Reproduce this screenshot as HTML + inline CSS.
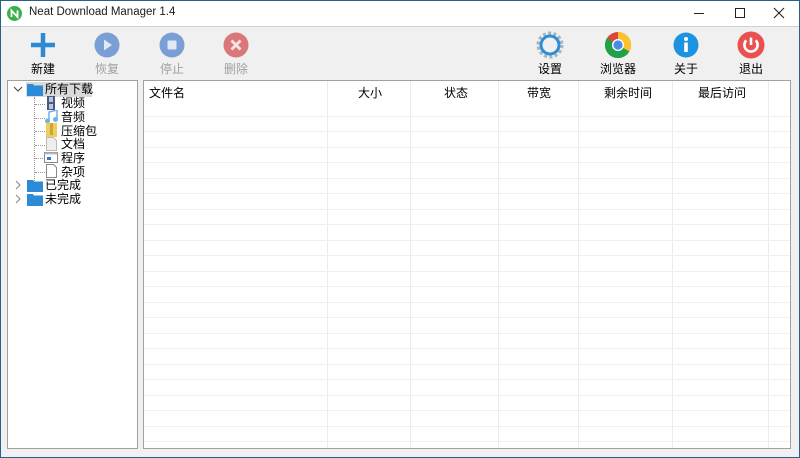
<!DOCTYPE html>
<html><head><meta charset="utf-8"><style>
*{margin:0;padding:0;box-sizing:border-box}
body{width:800px;height:458px;overflow:hidden;background:#f0f0f0;font-family:"Liberation Sans","Noto Sans CJK SC",sans-serif;font-size:12px;color:#000;position:relative}
.win{position:absolute;left:0;top:0;width:800px;height:458px;border:1px solid #2b5f86}
.title{position:absolute;left:0;top:0;width:800px;height:27px;background:#fff;border-bottom:1px solid #d0d0d0}
.title .t{position:absolute;left:29px;top:6px;font-size:11.5px;color:#1a1a1a}
.abs{position:absolute}
.tb{position:absolute;top:60px;font-size:12px;text-align:center;width:60px}
.dis{color:#a0a0a0}
.panel{position:absolute;background:#fff;border:1px solid #a0a0a0}
.tree div{position:absolute;font-size:12px;white-space:nowrap;line-height:14px}
.hdr{position:absolute;top:1px;height:23px;line-height:23px;font-size:12px}
.vl{position:absolute;top:0;width:1px;background:#e5ecf3;height:368px}
.hl{position:absolute;left:0;right:0;height:1px;background:#eef1f4}
</style></head><body>
<div class="title">
<svg class="abs" style="left:7px;top:6px" width="15" height="15"><circle cx="7.5" cy="7.5" r="7.5" fill="#3cb04a"/><path d="M4.5 11V4.5L10.5 11V4.5" stroke="#fff" stroke-width="1.8" fill="none"/></svg>
<div class="t">Neat Download Manager 1.4</div>
<div class="abs" style="left:694px;top:13px;width:10px;height:1px;background:#222"></div>
<div class="abs" style="left:735px;top:8px;width:10px;height:10px;border:1px solid #222"></div>
<svg class="abs" style="left:773px;top:7px" width="12" height="12"><path d="M1 1L11 11M11 1L1 11" stroke="#222" stroke-width="1.1"/></svg>
</div>
<div class="win"></div>

<svg class="abs" style="left:29px;top:31px" width="28" height="28"><path d="M14 2V26M2 14H26" stroke="#2a8ad6" stroke-width="4.5"/></svg>
<div class="tb" style="left:13px">新建</div>
<svg class="abs" style="left:94px;top:32px" width="26" height="26"><circle cx="13" cy="13" r="12.5" fill="#7a9fd4"/><path d="M10 7.5L18 13L10 18.5Z" fill="#dfe8f5"/></svg>
<div class="tb dis" style="left:77px">恢复</div>
<svg class="abs" style="left:159px;top:32px" width="26" height="26"><circle cx="13" cy="13" r="12.5" fill="#7a9fd4"/><rect x="8.5" y="8.5" width="9" height="9" rx="1" fill="#dfe8f5"/></svg>
<div class="tb dis" style="left:142px">停止</div>
<svg class="abs" style="left:223px;top:32px" width="26" height="26"><circle cx="13" cy="13" r="12.5" fill="#d9777b"/><path d="M8.5 8.5L17.5 17.5M17.5 8.5L8.5 17.5" stroke="#f6e3e3" stroke-width="2.8"/></svg>
<div class="tb dis" style="left:206px">删除</div>

<svg class="abs" style="left:536px;top:31px" width="28" height="28"><circle cx="14" cy="14" r="11.5" fill="none" stroke="#a9b4bd" stroke-width="4" stroke-dasharray="3 2.2"/><circle cx="14" cy="14" r="9" fill="none" stroke="#2f8fd6" stroke-width="3"/></svg>
<div class="tb" style="left:520px">设置</div>
<svg class="abs" style="left:604px;top:31px" width="28" height="28"><circle cx="14" cy="14" r="13" fill="#de4437"/><path d="M14 14L14 1A13 13 0 0 1 25.3 20.5Z" fill="#fbc22e"/><path d="M14 14L25.3 20.5A13 13 0 0 1 2.7 20.5Z" fill="#1fa24a"/><path d="M14 14L2.7 20.5A13 13 0 0 1 3 7Z" fill="#1fa24a"/><circle cx="14" cy="14" r="6" fill="#fff"/><circle cx="14" cy="14" r="4.6" fill="#4a8be8"/></svg>
<div class="tb" style="left:588px">浏览器</div>
<svg class="abs" style="left:673px;top:32px" width="26" height="26"><circle cx="13" cy="13" r="12.5" fill="#1c93e0"/><circle cx="13" cy="7" r="2" fill="#fff"/><rect x="11.2" y="10.5" width="3.6" height="9.5" fill="#fff"/></svg>
<div class="tb" style="left:656px">关于</div>
<svg class="abs" style="left:737px;top:31px" width="28" height="28"><circle cx="14" cy="14" r="13.5" fill="#ea5050"/><path d="M9.3 9.3A6.6 6.6 0 1 0 18.7 9.3" stroke="#fff" stroke-width="2.6" fill="none"/><path d="M14 6.5V14" stroke="#fff" stroke-width="2.6"/></svg>
<div class="tb" style="left:721px">退出</div>

<div class="panel tree" style="left:7px;top:80px;width:131px;height:369px">
<svg class="abs" style="left:5px;top:4px" width="10" height="8"><path d="M1 2L5 6L9 2" stroke="#444" fill="none"/></svg>
<div style="left:18px;top:1px;width:66px;height:15px;background:#dadada"></div>
<svg class="abs" style="left:19px;top:2px" width="16" height="13"><path d="M0 1H6L7 2.5H16V13H0Z" fill="#2c8ad8"/></svg>
<div style="left:37px;top:1px">所有下载</div>
<div style="left:26px;top:16px;width:1px;height:84px;border-left:1px dotted #999"></div>
<div style="left:27px;top:23px;width:10px;border-top:1px dotted #999"></div>
<div style="left:27px;top:37px;width:10px;border-top:1px dotted #999"></div>
<div style="left:27px;top:50px;width:10px;border-top:1px dotted #999"></div>
<div style="left:27px;top:64px;width:10px;border-top:1px dotted #999"></div>
<div style="left:27px;top:77px;width:10px;border-top:1px dotted #999"></div>
<div style="left:27px;top:91px;width:10px;border-top:1px dotted #999"></div>
<svg class="abs" style="left:38px;top:15px" width="10" height="14"><rect x="1" y="0" width="8" height="14" fill="#4a5a80"/><rect x="3" y="1" width="4" height="5" fill="#b8c7e0"/><rect x="3" y="8" width="4" height="5" fill="#b8c7e0"/></svg>
<div style="left:53px;top:15px">视频</div>
<svg class="abs" style="left:36px;top:29px" width="14" height="14"><path d="M5 11V2L13 0V9" stroke="#6fb2e8" stroke-width="1.5" fill="none"/><circle cx="3.5" cy="11" r="2.5" fill="#6fb2e8"/><circle cx="11.5" cy="9.5" r="2.5" fill="#6fb2e8"/></svg>
<div style="left:53px;top:29px">音频</div>
<svg class="abs" style="left:38px;top:42px" width="11" height="14"><rect x="0" y="0" width="11" height="14" fill="#f2cd5c"/><rect x="4" y="0" width="3" height="12" fill="#c9a640"/></svg>
<div style="left:53px;top:43px">压缩包</div>
<svg class="abs" style="left:38px;top:56px" width="11" height="14"><path d="M0.5 0.5H7.5L10.5 3.5V13.5H0.5Z" fill="#eee" stroke="#bbb"/></svg>
<div style="left:53px;top:56px">文档</div>
<svg class="abs" style="left:36px;top:71px" width="14" height="11"><rect x="0.5" y="0.5" width="13" height="10" fill="#fff" stroke="#888"/><rect x="0.5" y="0.5" width="13" height="2" fill="#bbb"/><rect x="3" y="5" width="4" height="3" fill="#2a7bd0"/></svg>
<div style="left:53px;top:70px">程序</div>
<svg class="abs" style="left:38px;top:83px" width="11" height="14"><path d="M0.5 0.5H7.5L10.5 3.5V13.5H0.5Z" fill="#fff" stroke="#888"/></svg>
<div style="left:53px;top:84px">杂项</div>
<svg class="abs" style="left:6px;top:99px" width="8" height="10"><path d="M2 1L6 5L2 9" stroke="#888" fill="none"/></svg>
<svg class="abs" style="left:19px;top:98px" width="16" height="13"><path d="M0 1H6L7 2.5H16V13H0Z" fill="#2c8ad8"/></svg>
<div style="left:37px;top:97px">已完成</div>
<svg class="abs" style="left:6px;top:113px" width="8" height="10"><path d="M2 1L6 5L2 9" stroke="#888" fill="none"/></svg>
<svg class="abs" style="left:19px;top:112px" width="16" height="13"><path d="M0 1H6L7 2.5H16V13H0Z" fill="#2c8ad8"/></svg>
<div style="left:37px;top:111px">未完成</div>
</div>

<div class="panel" style="left:143px;top:80px;width:648px;height:369px;overflow:hidden">
<div class="hdr" style="left:5px">文件名</div>
<div class="hdr" style="left:214px">大小</div>
<div class="hdr" style="left:300px">状态</div>
<div class="hdr" style="left:383px">带宽</div>
<div class="hdr" style="left:460px">剩余时间</div>
<div class="hdr" style="left:554px">最后访问</div>
<div class="vl" style="left:183px"></div>
<div class="vl" style="left:266px"></div>
<div class="vl" style="left:354px"></div>
<div class="vl" style="left:434px"></div>
<div class="vl" style="left:528px"></div>
<div class="vl" style="left:624px"></div>
<div class="hl" style="top:35px"></div><div class="hl" style="top:50px"></div><div class="hl" style="top:66px"></div><div class="hl" style="top:81px"></div><div class="hl" style="top:97px"></div><div class="hl" style="top:112px"></div><div class="hl" style="top:128px"></div><div class="hl" style="top:143px"></div><div class="hl" style="top:159px"></div><div class="hl" style="top:174px"></div><div class="hl" style="top:190px"></div><div class="hl" style="top:205px"></div><div class="hl" style="top:221px"></div><div class="hl" style="top:236px"></div><div class="hl" style="top:252px"></div><div class="hl" style="top:267px"></div><div class="hl" style="top:283px"></div><div class="hl" style="top:298px"></div><div class="hl" style="top:314px"></div><div class="hl" style="top:329px"></div><div class="hl" style="top:345px"></div><div class="hl" style="top:360px"></div>
</div>
</body></html>
